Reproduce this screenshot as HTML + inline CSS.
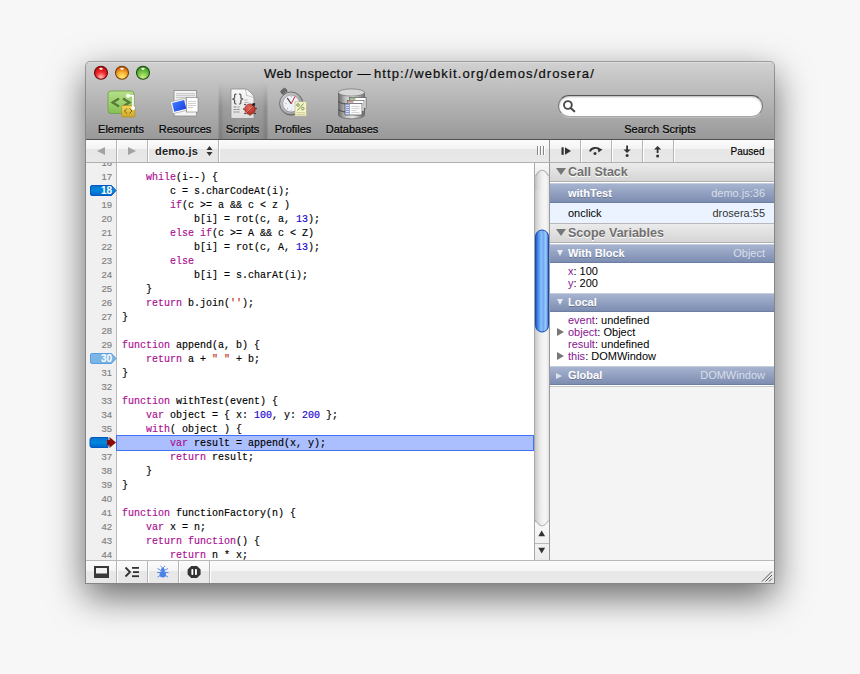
<!DOCTYPE html>
<html><head><meta charset="utf-8">
<style>
*{margin:0;padding:0;box-sizing:border-box}
html,body{width:860px;height:674px;overflow:hidden;background:#f7f7f7;font-family:"Liberation Sans",sans-serif}
div,span,svg{position:absolute}
b{font-weight:normal}
#frame{left:85px;top:61px;width:690px;height:523px;border-radius:5px 5px 0 0;background:linear-gradient(#9c9c9c,#878787 30px,#858585);
 box-shadow:0 13px 36px rgba(0,0,0,0.58)}
#tb{left:86px;top:62px;width:688px;height:77px;border-radius:4px 4px 0 0;background:linear-gradient(#e6e6e6,#d0d0d0 1.5px,#c6c6c6 20%,#999)}
#tbline{left:86px;top:139px;width:688px;height:1px;background:#505050}
.tt{top:66px;-webkit-text-stroke:0.2px #000;font-size:13px;color:#111;white-space:pre}
.light{top:66px;width:14px;height:14px;border-radius:50%}
.tlabel{top:123px;font-size:11px;color:#000;white-space:pre;text-align:center;-webkit-text-stroke:0.2px #000;text-shadow:0 1px 0 rgba(255,255,255,0.25)}
#sel{left:218px;top:82px;width:50px;height:57px;background:linear-gradient(90deg,rgba(0,0,0,0.05),rgba(0,0,0,0.2) 2px,rgba(0,0,0,0.1) 6px,rgba(0,0,0,0.07) 50%,rgba(0,0,0,0.1) 44px,rgba(0,0,0,0.2) 48px,rgba(0,0,0,0.05));-webkit-mask-image:linear-gradient(transparent,#000 45%)}
#search{left:558px;top:95px;width:205px;height:22px;border-radius:11px;background:#fff;border:1px solid;border-color:#555 #7a7a7a #a8a8a8 #7a7a7a;box-shadow:inset 0 1px 2px rgba(0,0,0,0.3),0 1px 0 rgba(255,255,255,0.25)}
#nav{left:86px;top:140px;width:688px;height:22px;background:linear-gradient(#fbfbfb,#f3f3f3 43%,#e6e6e6 43%,#e8e8e8)}
#navline{left:86px;top:162px;width:688px;height:1px;background:#b0b0b0}
.sep{width:1px;background:#b8b8b8}
#code{left:86px;top:163px;width:448px;height:397px;background:#fff;overflow:hidden}
#gutter{left:86px;top:163px;width:30px;height:397px;background:#f0f0f0}
#gline{left:116px;top:163px;width:1px;height:397px;background:#bbb}
.ln{left:86px;width:26px;text-align:right;font-size:9.5px;-webkit-text-stroke:0.15px #808080;color:#808080;height:14px;line-height:14px}
.cl{left:122px;white-space:pre;font-family:"Liberation Mono",monospace;font-size:10px;-webkit-text-stroke:0.15px currentColor;height:14px;line-height:14px;color:#000}
.k{color:#aa0d91}.n{color:#1c00cf}.s{color:#c41a16}
#scroll{left:534px;top:163px;width:15px;height:397px;background:linear-gradient(90deg,#c8c8c8,#ececec 30%,#f8f8f8 60%,#e0e0e0)}
#divider{left:549px;top:140px;width:1px;height:420px;background:#9a9a9a}
#sb{left:550px;top:140px;width:224px;height:420px;background:#f4f4f4}
#status{left:86px;top:561px;width:688px;height:22px;background:linear-gradient(#fbfbfb,#f5f5f5 45%,#e8e8e8 45%,#e8e8e8)}
#stline{left:86px;top:560px;width:688px;height:1px;background:#b8b8b8}
.ph{left:550px;width:224px;background:linear-gradient(#ebebeb,#d5d5d5);border-bottom:1px solid #b0b0b0}
.ph span{left:18px;font-size:12.5px;font-weight:bold;color:#707070;text-shadow:0 1px 0 #fff;white-space:pre}
.tri{width:0;height:0;border-left:5px solid transparent;border-right:5px solid transparent;border-top:7.5px solid #777}
.bh{left:550px;width:224px;background:linear-gradient(#a7b4d0,#7d8db1);border-top:1px solid #c5cde0;border-bottom:1px solid #6c7ea3}
.bh span{top:2px;font-size:11px;font-weight:bold;color:#fff;text-shadow:0 1px 0 rgba(0,0,0,0.25);white-space:pre}
.bh .r{left:auto;right:9px;font-weight:normal;color:#d8deea;text-shadow:none}
.prop{left:568px;font-size:11px;white-space:pre;color:#000;height:12px;line-height:12px}
.pn{color:#881391}
.wtri{width:0;height:0;border-top:4px solid transparent;border-bottom:4px solid transparent;border-left:7px solid #fff}
.gtri{width:0;height:0;border-top:4px solid transparent;border-bottom:4px solid transparent;border-left:7px solid #777}
</style></head><body>
<div id="frame"></div>
<div id="tb"></div>
<div id="tbline"></div>
<div class="tt" style="left:264px;letter-spacing:0.42px">Web Inspector</div><div class="tt" style="left:357.5px;letter-spacing:0">—</div><div class="tt" style="left:374px;letter-spacing:1.1px">http://webkit.org/demos/drosera/</div>
<svg style="left:0;top:0" width="860" height="674">
<defs>
<radialGradient id="lr" cx="0.5" cy="0.85" r="0.75"><stop offset="0" stop-color="#ffc0c0"/><stop offset="0.55" stop-color="#f02828"/><stop offset="1" stop-color="#c01010"/></radialGradient>
<radialGradient id="lo" cx="0.5" cy="0.85" r="0.75"><stop offset="0" stop-color="#fff080"/><stop offset="0.55" stop-color="#f8b030"/><stop offset="1" stop-color="#d06010"/></radialGradient>
<radialGradient id="lg" cx="0.5" cy="0.85" r="0.75"><stop offset="0" stop-color="#d0f088"/><stop offset="0.55" stop-color="#78c448"/><stop offset="1" stop-color="#3c9a20"/></radialGradient>
</defs>
<circle cx="101" cy="72.8" r="6.5" fill="url(#lr)" stroke="#6a0808" stroke-width="1.1"/>
<circle cx="122" cy="72.8" r="6.5" fill="url(#lo)" stroke="#7a3a00" stroke-width="1.1"/>
<circle cx="143" cy="72.8" r="6.5" fill="url(#lg)" stroke="#1c4a10" stroke-width="1.1"/>
<ellipse cx="101" cy="68.8" rx="1.8" ry="1.1" fill="#fff" opacity="0.9"/>
<ellipse cx="122" cy="68.8" rx="1.8" ry="1.1" fill="#fff" opacity="0.9"/>
<ellipse cx="143" cy="68.8" rx="1.8" ry="1.1" fill="#fff" opacity="0.9"/>
</svg>
<div id="sel"></div>
<div class="tlabel" style="left:97px;width:48px">Elements</div>
<div class="tlabel" style="left:158px;width:54px">Resources</div>
<div class="tlabel" style="left:224px;width:37px">Scripts</div>
<div class="tlabel" style="left:273px;width:40px">Profiles</div>
<div class="tlabel" style="left:325px;width:54px">Databases</div>
<div id="search"></div>
<div class="tlabel" style="left:610px;width:100px">Search Scripts</div>
<svg style="left:0;top:0" width="860" height="674" viewBox="0 0 860 674">
<defs>
 <linearGradient id="gG" x1="0" y1="0" x2="0" y2="1"><stop offset="0" stop-color="#b6e08a"/><stop offset="1" stop-color="#86bf55"/></linearGradient>
 <linearGradient id="gY" x1="0" y1="0" x2="0" y2="1"><stop offset="0" stop-color="#f2d65a"/><stop offset="1" stop-color="#cfa526"/></linearGradient>
 <linearGradient id="gB" x1="0" y1="0" x2="1" y2="1"><stop offset="0" stop-color="#3f7dff"/><stop offset="1" stop-color="#1b3fe0"/></linearGradient>
 <linearGradient id="gPage" x1="0" y1="0" x2="0" y2="1"><stop offset="0" stop-color="#fafafa"/><stop offset="1" stop-color="#dedede"/></linearGradient>
 <radialGradient id="gBug" cx="0.4" cy="0.35" r="0.7"><stop offset="0" stop-color="#e86a5e"/><stop offset="1" stop-color="#a8281e"/></radialGradient>
 <linearGradient id="gCyl" x1="0" y1="0" x2="1" y2="0"><stop offset="0" stop-color="#6a6a6a"/><stop offset="0.3" stop-color="#c8c8c8"/><stop offset="0.55" stop-color="#e6e6e6"/><stop offset="1" stop-color="#707070"/></linearGradient>
 <linearGradient id="gWatch" x1="0" y1="0" x2="1" y2="1"><stop offset="0" stop-color="#e0e0e0"/><stop offset="1" stop-color="#6a6a6a"/></linearGradient>
</defs>
<!-- Elements -->
<rect x="108" y="91" width="26" height="22.5" rx="3" fill="url(#gG)" stroke="#6c9e45" stroke-width="0.8"/>
<path d="M119 98.5 L112.5 102.5 L119 106.5" fill="none" stroke="#557b35" stroke-width="2.2"/>
<path d="M123 98.5 L129.5 102.5 L123 106.5" fill="none" stroke="#557b35" stroke-width="2.2"/>
<rect x="121.5" y="105.5" width="13.5" height="11.5" rx="1.5" fill="url(#gY)" stroke="#a88a20" stroke-width="0.6"/>
<path d="M127 108.5 L124.5 111 L127 113.5 M129.5 108.5 L132 111 L129.5 113.5" fill="none" stroke="#5a4a10" stroke-width="0.8"/>
<path d="M128 95.7 H133 V108" fill="none" stroke="#fff" stroke-width="1.6"/>
<circle cx="128" cy="95.7" r="2" fill="#fff"/><circle cx="133" cy="108" r="2" fill="#fff"/>
<!-- Resources -->
<rect x="174" y="90.5" width="22.5" height="25.5" fill="#f4f4f4" stroke="#8a8a8a" stroke-width="0.8"/>
<path d="M176 93.7h19 M176 95.7h19 M176 97.7h12" stroke="#aaa" stroke-width="0.7"/>
<g transform="rotate(-14 179 106)"><rect x="171.5" y="100" width="15.5" height="12" fill="#fff" stroke="#999" stroke-width="0.6"/><rect x="173" y="101.5" width="12.5" height="9" fill="url(#gB)"/></g>
<rect x="186.5" y="97.5" width="11.5" height="14.5" fill="#fff" stroke="#888" stroke-width="0.7"/>
<path d="M188 101.5h8 M188 103.5h8 M188 105.5h8 M188 107.5h5" stroke="#b0b0b0" stroke-width="0.6"/>
<!-- Scripts -->
<path d="M231 89 H245 Q247 89 249 91 L252 94 Q254 96 254 98 V118.5 H231 Z" fill="url(#gPage)" stroke="#8e8e8e" stroke-width="0.8"/>
<path d="M245 89 Q246.5 92 246.5 95.5 Q250 95.5 254 98" fill="#fdfdfd" stroke="#9a9a9a" stroke-width="0.6"/>
<path d="M236.5 94.2 H235.8 Q234.6 94.2 234.6 95.4 V98 L232.9 99.1 L234.6 100.2 V102.8 Q234.6 104 235.8 104 H236.5" fill="none" stroke="#555" stroke-width="1.2"/>
<path d="M239 94.2 H239.7 Q240.9 94.2 240.9 95.4 V98 L242.6 99.1 L240.9 100.2 V102.8 Q240.9 104 239.7 104 H239" fill="none" stroke="#555" stroke-width="1.2"/>
<path d="M233.5 107h3 M237.5 107h2 M233.5 109.5h2.5 M236.5 109.5h3 M233.5 112h2.5 M236.5 112h3" stroke="#777" stroke-width="0.8"/>
<path d="M244.5 100h3 M244.5 102.5h4" stroke="#999" stroke-width="0.7"/>
<g fill="#222"><circle cx="245" cy="104.5" r="0.8"/><circle cx="243.8" cy="109" r="0.8"/><circle cx="245" cy="113.5" r="0.8"/><circle cx="254.5" cy="104" r="0.8"/><circle cx="256" cy="108.5" r="0.8"/><circle cx="255" cy="113.5" r="0.8"/><circle cx="250" cy="115" r="0.7"/></g>
<circle cx="250" cy="109.2" r="5.4" fill="url(#gBug)" stroke="#8a2a20" stroke-width="0.5"/>
<path d="M246 113.2 L254 105.2" stroke="#f0a090" stroke-width="0.9" opacity="0.8"/>
<path d="M246.4 113.6 L254.4 105.6" stroke="#7a1a12" stroke-width="0.5"/>
<circle cx="253.5" cy="104.5" r="1.5" fill="#222"/>
<!-- Profiles -->
<g transform="rotate(-40 284.5 92)"><rect x="281.5" y="88.8" width="6" height="4.5" rx="1.5" fill="#6a6a6a" stroke="#444" stroke-width="0.5"/><rect x="283.2" y="92.5" width="2.6" height="2.5" fill="#888"/></g>
<circle cx="291.2" cy="103.6" r="11.6" fill="url(#gWatch)" stroke="#4e4e4e" stroke-width="0.7"/>
<circle cx="291.2" cy="103.6" r="9.6" fill="none" stroke="#bdbdbd" stroke-width="1"/>
<circle cx="291.2" cy="103.6" r="8.4" fill="#eef0f8" stroke="#8a8a8a" stroke-width="0.5"/>
<g fill="#999"><circle cx="291.2" cy="96.6" r="0.5"/><circle cx="286" cy="103.6" r="0.5"/><circle cx="291.2" cy="110.4" r="0.5"/><circle cx="287.5" cy="108.5" r="0.5"/><circle cx="287.5" cy="98.8" r="0.5"/></g>
<path d="M291.2 103.8 L287.3 98" stroke="#333" stroke-width="1.1"/>
<path d="M291.2 103.8 L295 96.4" stroke="#d82828" stroke-width="1"/>
<rect x="295" y="101.8" width="11.3" height="14.2" fill="#f6f3c6" stroke="#bcb48a" stroke-width="0.6"/>
<g fill="none" stroke="#6f8f50" stroke-width="0.9"><circle cx="298" cy="105" r="1.3"/><circle cx="302.8" cy="108.6" r="1.3"/><path d="M303.5 103.5 L297.5 110.5"/></g>
<path d="M296.5 112.6h8.5 M296.5 114.4h8.5" stroke="#b8b484" stroke-width="0.6"/>
<!-- Databases -->
<path d="M338.5 92.5 V115 A13 3.8 0 0 0 364.5 115 V92.5" fill="url(#gCyl)" stroke="#555" stroke-width="0.6"/>
<path d="M338.5 101 A13 3.5 0 0 0 364.5 101 M338.5 109 A13 3.5 0 0 0 364.5 109" fill="none" stroke="#4a4a4a" stroke-width="1"/>
<ellipse cx="351.5" cy="92.5" rx="13" ry="3.6" fill="#d8d8d8" stroke="#666" stroke-width="0.6"/>
<rect x="349.5" y="97.5" width="16.5" height="11" fill="#fff" stroke="#444" stroke-width="0.6"/>
<rect x="350" y="98" width="5.5" height="1.8" fill="#9ab87a"/>
<rect x="347.5" y="100.5" width="16.5" height="11" fill="#fff" stroke="#444" stroke-width="0.6"/>
<rect x="348" y="101" width="5.5" height="1.8" fill="#c89898"/>
<rect x="345" y="103.5" width="17" height="11.5" fill="#fafafa" stroke="#333" stroke-width="0.6"/>
<rect x="345.3" y="103.8" width="4.5" height="11" fill="#8898c8"/>
<path d="M346 105.5h3 M346 107.5h3 M346 109.5h3 M346 111.5h3 M346 113.5h3" stroke="#fff" stroke-width="0.7"/>
<path d="M351.5 106.5h8 M351.5 108.5h8 M351.5 110.5h5 M351.5 112.5h8" stroke="#bbb" stroke-width="0.6"/>
<!-- search magnifier -->
<circle cx="567.9" cy="105" r="3.9" fill="none" stroke="#4a4a4a" stroke-width="1.9"/>
<path d="M570.7 107.9 L574.3 111.3" stroke="#4a4a4a" stroke-width="2.1" stroke-linecap="round"/>
</svg>

<div id="code"></div>
<div id="gutter"></div>
<div id="gline"></div>
<div style="left:116px;top:435px;width:418px;height:16px;background:#abbffe;border:1px solid #4073f4"></div>
<div class="ln" style="top:156px">16</div><div class="cl" style="top:157px"></div>
<div class="ln" style="top:170px">17</div><div class="cl" style="top:171px">    <b class="k">while</b>(i--) {</div>
<div class="ln" style="top:184px">18</div><div class="cl" style="top:185px">        c = s.charCodeAt(i);</div>
<div class="ln" style="top:198px">19</div><div class="cl" style="top:199px">        <b class="k">if</b>(c &gt;= a &amp;&amp; c &lt; z )</div>
<div class="ln" style="top:212px">20</div><div class="cl" style="top:213px">            b[i] = rot(c, a, <b class="n">13</b>);</div>
<div class="ln" style="top:226px">21</div><div class="cl" style="top:227px">        <b class="k">else</b> <b class="k">if</b>(c &gt;= A &amp;&amp; c &lt; Z)</div>
<div class="ln" style="top:240px">22</div><div class="cl" style="top:241px">            b[i] = rot(c, A, <b class="n">13</b>);</div>
<div class="ln" style="top:254px">23</div><div class="cl" style="top:255px">        <b class="k">else</b></div>
<div class="ln" style="top:268px">24</div><div class="cl" style="top:269px">            b[i] = s.charAt(i);</div>
<div class="ln" style="top:282px">25</div><div class="cl" style="top:283px">    }</div>
<div class="ln" style="top:296px">26</div><div class="cl" style="top:297px">    <b class="k">return</b> b.join(<b class="s">''</b>);</div>
<div class="ln" style="top:310px">27</div><div class="cl" style="top:311px">}</div>
<div class="ln" style="top:324px">28</div><div class="cl" style="top:325px"></div>
<div class="ln" style="top:338px">29</div><div class="cl" style="top:339px"><b class="k">function</b> append(a, b) {</div>
<div class="ln" style="top:352px">30</div><div class="cl" style="top:353px">    <b class="k">return</b> a + <b class="s">" "</b> + b;</div>
<div class="ln" style="top:366px">31</div><div class="cl" style="top:367px">}</div>
<div class="ln" style="top:380px">32</div><div class="cl" style="top:381px"></div>
<div class="ln" style="top:394px">33</div><div class="cl" style="top:395px"><b class="k">function</b> withTest(event) {</div>
<div class="ln" style="top:408px">34</div><div class="cl" style="top:409px">    <b class="k">var</b> object = { x: <b class="n">100</b>, y: <b class="n">200</b> };</div>
<div class="ln" style="top:422px">35</div><div class="cl" style="top:423px">    <b class="k">with</b>( object ) {</div>
<div class="ln" style="top:436px">36</div><div class="cl" style="top:437px">        <b class="k">var</b> result = append(x, y);</div>
<div class="ln" style="top:450px">37</div><div class="cl" style="top:451px">        <b class="k">return</b> result;</div>
<div class="ln" style="top:464px">38</div><div class="cl" style="top:465px">    }</div>
<div class="ln" style="top:478px">39</div><div class="cl" style="top:479px">}</div>
<div class="ln" style="top:492px">40</div><div class="cl" style="top:493px"></div>
<div class="ln" style="top:506px">41</div><div class="cl" style="top:507px"><b class="k">function</b> functionFactory(n) {</div>
<div class="ln" style="top:520px">42</div><div class="cl" style="top:521px">    <b class="k">var</b> x = n;</div>
<div class="ln" style="top:534px">43</div><div class="cl" style="top:535px">    <b class="k">return</b> <b class="k">function</b>() {</div>
<div class="ln" style="top:548px">44</div><div class="cl" style="top:549px">        <b class="k">return</b> n * x;</div>
<svg style="left:0;top:0" width="860" height="674">
 <defs><linearGradient id="bpg" x1="0" y1="0" x2="0" y2="1"><stop offset="0" stop-color="#0a6fd0"/><stop offset="0.5" stop-color="#0088dd"/><stop offset="1" stop-color="#0064c8"/></linearGradient>
 <linearGradient id="bpd" x1="0" y1="0" x2="0" y2="1"><stop offset="0" stop-color="#7eb8e8"/><stop offset="1" stop-color="#76b4e4"/></linearGradient></defs>
 <path d="M92 185.5 H111.5 L116 190.5 L111.5 195.5 H92 Q90.5 195.5 90.5 194 V187 Q90.5 185.5 92 185.5 Z" fill="url(#bpg)" stroke="#0058c0" stroke-width="1"/>
 <path d="M92 353.5 H111.5 L116 358.5 L111.5 363.5 H92 Q90.5 363.5 90.5 362 V355 Q90.5 353.5 92 353.5 Z" fill="url(#bpd)" stroke="#5a9ee0" stroke-width="1"/>
 <path d="M92 437.5 H108 V447.5 H92 Q90 447.5 90 445.5 V439.5 Q90 437.5 92 437.5 Z" fill="url(#bpg)" stroke="#0058c0" stroke-width="1"/>
 <path d="M107 440 H109.5 V437 L116 442.5 L109.5 448 V445 H107 Z" fill="#8a0a0a"/>
</svg>
<div style="left:92px;top:184px;width:20px;text-align:right;font-size:10px;font-weight:bold;color:#fff;height:13px;line-height:13px">18</div>
<div style="left:92px;top:352px;width:20px;text-align:right;font-size:10px;font-weight:bold;color:#fff;height:13px;line-height:13px">30</div>

<div id="scroll"></div>
<div id="divider"></div>
<div id="sb"></div>
<div class="ph" style="top:162px;height:20px;border-top:1px solid #b0b0b0;box-shadow:0 1px 0 #fff"><div class="tri" style="left:6px;top:5px"></div><span style="top:2px">Call Stack</span></div>
<div class="bh" style="top:183px;height:20px"><span style="left:18px;top:3px">withTest</span><span class="r" style="top:3px">demo.js:36</span></div>
<div style="left:550px;top:203px;width:224px;height:20px;background:#eaf3ff"><span style="left:18px;top:4px;font-size:11px;white-space:pre;color:#000">onclick</span><span style="right:9px;top:4px;font-size:11px;white-space:pre;color:#333">drosera:55</span></div>
<div class="ph" style="top:223px;height:20px;border-top:1px solid #b8b8b8;box-shadow:0 1px 0 #fff"><div class="tri" style="left:6px;top:5px"></div><span style="top:2px">Scope Variables</span></div>
<div class="bh" style="top:244px;height:19px"><div style="left:7px;top:5px;width:0;height:0;border-top:6.5px solid #e6eaf2;border-left:3.8px solid transparent;border-right:3.8px solid transparent"></div><span style="left:18px">With Block</span><span class="r">Object</span></div>
<div style="left:550px;top:263px;width:224px;height:30px;background:#fff"></div>
<div class="prop" style="top:265px"><b class="pn">x</b>: 100</div>
<div class="prop" style="top:277px"><b class="pn">y</b>: 200</div>
<div class="bh" style="top:293px;height:19px"><div style="left:7px;top:5px;width:0;height:0;border-top:6.5px solid #e6eaf2;border-left:3.8px solid transparent;border-right:3.8px solid transparent"></div><span style="left:18px">Local</span></div>
<div style="left:550px;top:312px;width:224px;height:54px;background:#fff"></div>
<div class="prop" style="top:314px"><b class="pn">event</b>: undefined</div>
<div class="gtri" style="left:557px;top:328px"></div>
<div class="prop" style="top:326px"><b class="pn">object</b>: Object</div>
<div class="prop" style="top:338px"><b class="pn">result</b>: undefined</div>
<div class="gtri" style="left:557px;top:352px"></div>
<div class="prop" style="top:350px"><b class="pn">this</b>: DOMWindow</div>
<div class="bh" style="top:366px;height:19px;box-shadow:0 1px 0 #fff"><div style="left:6px;top:5.5px;width:0;height:0;border-left:6.5px solid #dde2ec;border-top:3.5px solid transparent;border-bottom:3.5px solid transparent"></div><span style="left:18px">Global</span><span class="r">DOMWindow</span></div>
<div style="left:550px;top:386px;width:224px;height:1px;background:#c6c6c6"></div>

<div id="nav"></div>
<div id="navline"></div>
<div style="left:549px;top:140px;width:1px;height:22px;background:#9a9a9a"></div>
<div style="left:116px;top:140px;width:1px;height:22px;background:#b5b5b5"></div><div style="left:117px;top:140px;width:1px;height:22px;background:#fff"></div>
<div style="left:147px;top:140px;width:1px;height:22px;background:#b5b5b5"></div><div style="left:148px;top:140px;width:1px;height:22px;background:#fff"></div>
<div style="left:218px;top:140px;width:1px;height:22px;background:#b5b5b5"></div><div style="left:219px;top:140px;width:1px;height:22px;background:#fff"></div>
<div style="left:580px;top:140px;width:1px;height:22px;background:#b5b5b5"></div><div style="left:581px;top:140px;width:1px;height:22px;background:#fff"></div>
<div style="left:611px;top:140px;width:1px;height:22px;background:#b5b5b5"></div><div style="left:612px;top:140px;width:1px;height:22px;background:#fff"></div>
<div style="left:642px;top:140px;width:1px;height:22px;background:#b5b5b5"></div><div style="left:643px;top:140px;width:1px;height:22px;background:#fff"></div>
<div style="left:673px;top:140px;width:1px;height:22px;background:#b5b5b5"></div><div style="left:674px;top:140px;width:1px;height:22px;background:#fff"></div>
<div style="left:155px;top:145px;letter-spacing:0.2px;font-size:11px;font-weight:bold;color:#222;white-space:pre;text-shadow:0 1px 0 rgba(255,255,255,0.6)">demo.js</div>
<div style="left:714px;top:146px;width:50.5px;text-align:right;font-size:10px;color:#000;white-space:pre;-webkit-text-stroke:0.15px #000">Paused</div>
<svg style="left:0;top:0" width="860" height="674">
 <path d="M97 151 L105 147 V155 Z" fill="#a2a2a2"/>
 <path d="M136 151 L128 147 V155 Z" fill="#a2a2a2"/>
 <path d="M209.5 146 L206.5 150 H212.5 Z M209.5 156 L206.5 152 H212.5 Z" fill="#333"/>
 <g fill="#888"><rect x="537" y="146" width="1" height="9"/><rect x="540" y="146" width="1" height="9"/><rect x="543" y="146" width="1" height="9"/></g>
 <g fill="#fff"><rect x="538" y="146" width="1" height="9"/><rect x="541" y="146" width="1" height="9"/><rect x="544" y="146" width="1" height="9"/></g>
 <!-- continue -->
 <rect x="561.5" y="147.3" width="2.2" height="7.5" fill="#333"/>
 <path d="M565 147.3 L571 151 L565 154.8 Z" fill="#333"/>
 <!-- step over -->
 <path d="M590 151.5 A5.5 4.5 0 0 1 600 150" fill="none" stroke="#333" stroke-width="1.8"/>
 <path d="M597.5 147.5 L602.5 149.5 L598.5 152.5 Z" fill="#333"/>
 <circle cx="595" cy="153.5" r="1.5" fill="#333"/>
 <!-- step into -->
 <rect x="626.2" y="145.5" width="1.8" height="5" fill="#333"/>
 <path d="M623.5 149.5 H630.7 L627.1 153 Z" fill="#333"/>
 <circle cx="627.1" cy="155.5" r="1.5" fill="#333"/>
 <!-- step out -->
 <path d="M654 149.5 H661.2 L657.6 146 Z" fill="#333"/>
 <rect x="656.7" y="149" width="1.8" height="4" fill="#333"/>
 <circle cx="657.6" cy="156" r="1.5" fill="#333"/>
</svg>

<div id="stline"></div>
<div id="status"></div>
<div style="left:116px;top:561px;width:1px;height:22px;background:#b5b5b5"></div><div style="left:117px;top:561px;width:1px;height:22px;background:#fff"></div>
<div style="left:147px;top:561px;width:1px;height:22px;background:#b5b5b5"></div><div style="left:148px;top:561px;width:1px;height:22px;background:#fff"></div>
<div style="left:178px;top:561px;width:1px;height:22px;background:#b5b5b5"></div><div style="left:179px;top:561px;width:1px;height:22px;background:#fff"></div>
<div style="left:209px;top:561px;width:1px;height:22px;background:#b5b5b5"></div><div style="left:210px;top:561px;width:1px;height:22px;background:#fff"></div>
<svg style="left:0;top:0" width="860" height="674">
 <rect x="94" y="566" width="15" height="12" fill="#383838"/>
 <rect x="96" y="568" width="11" height="5.5" fill="#f2f2f2"/>
 <path d="M125.5 567.5 L130 572 L125.5 576.5" fill="none" stroke="#333" stroke-width="1.8"/>
 <rect x="132" y="567" width="7" height="1.8" fill="#333"/><rect x="133" y="571.2" width="6" height="1.8" fill="#333"/><rect x="132" y="575.3" width="7" height="1.8" fill="#333"/>
 <g stroke="#4a82e8" stroke-width="0.9" fill="none"><path d="M157.5 568.5 L162.8 571.5 L168 568.5 M157 572.5 H168.5 M157.5 577 L162.8 574 L168 577 M160.5 566 L162.8 568 L165 566"/></g>
 <circle cx="162.8" cy="569.5" r="1.8" fill="#4a82e8"/>
 <circle cx="162.8" cy="574.2" r="3.2" fill="#4a82e8"/>
 <path d="M191.2 566 H197 L200.6 569.6 V574.4 L197 578 H191.2 L187.6 574.4 V569.6 Z" fill="#333"/>
 <rect x="191.4" y="569" width="1.9" height="6" rx="0.8" fill="#fff"/><rect x="195" y="569" width="1.9" height="6" rx="0.8" fill="#fff"/>
 <g stroke="#555" stroke-width="1"><path d="M762 581.5 L772 571.5 M765.5 581.5 L772 575 M769 581.5 L772 578.5"/></g>
</svg>

<svg style="left:0;top:0" width="860" height="674">
 <defs>
  <linearGradient id="trk" x1="0" y1="0" x2="1" y2="0"><stop offset="0" stop-color="#bcbcbc"/><stop offset="0.2" stop-color="#d8d8d8"/><stop offset="0.5" stop-color="#efefef"/><stop offset="0.8" stop-color="#f6f6f6"/><stop offset="1" stop-color="#e2e2e2"/></linearGradient>
  <linearGradient id="thumb" x1="0" y1="0" x2="1" y2="0"><stop offset="0" stop-color="#1a4fc4"/><stop offset="0.2" stop-color="#4a8ae8"/><stop offset="0.45" stop-color="#8cc0f8"/><stop offset="0.6" stop-color="#6aa8f0"/><stop offset="0.8" stop-color="#a0d0fc"/><stop offset="1" stop-color="#2a62d0"/></linearGradient>
  <linearGradient id="capg" x1="0" y1="0" x2="0" y2="1"><stop offset="0" stop-color="#f8f8f8"/><stop offset="1" stop-color="#ececec"/></linearGradient>
 </defs>
 <rect x="534" y="163" width="15" height="397" fill="url(#trk)"/>
 <rect x="535" y="163" width="14" height="14" fill="url(#capg)"/>
 <path d="M535 177 Q542 163 549 177 V190 H535 Z" fill="url(#trk)"/>
 <path d="M535.5 176 Q542 164.5 548.5 176" fill="none" stroke="#9a9a9a" stroke-width="1.1" opacity="0.8"/>
 <rect x="534" y="163" width="1" height="397" fill="#a8a8a8"/>
 <rect x="535.5" y="230" width="13" height="102" rx="6.5" fill="url(#thumb)" stroke="#1747b0" stroke-width="1"/>
 <rect x="535" y="522" width="14" height="38" fill="url(#capg)"/>
 <path d="M535 519 Q542 533 549 519 V522 H535 Z" fill="url(#trk)"/>
 <path d="M535.5 520.5 Q542 531.5 548.5 520.5" fill="none" stroke="#a0a0a0" stroke-width="1" opacity="0.8"/>
 <rect x="535" y="543" width="14" height="1" fill="#b8b8b8"/>
 <path d="M541.7 530.5 L538.3 536.3 H545.1 Z" fill="#333"/>
 <path d="M541.7 553.5 L538.3 547.7 H545.1 Z" fill="#333"/>
 <rect x="534" y="519" width="1" height="41" fill="#a8a8a8"/>
</svg>

</body></html>
